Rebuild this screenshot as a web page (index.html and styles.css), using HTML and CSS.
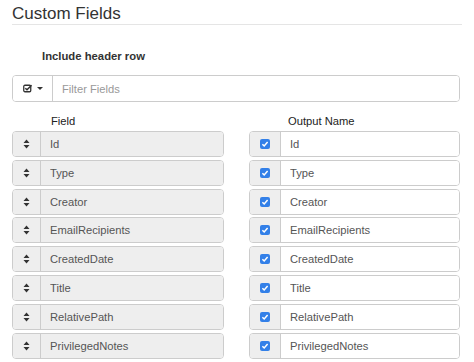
FILE: index.html
```html
<!DOCTYPE html>
<html lang="en">
<head>
    <meta charset="UTF-8">
    <title>Custom Fields</title>
    <link rel="stylesheet" href="styles.css">
</head>
<body>
    <div class="container">
        <h2 class="page-title">Custom Fields</h2>

        <div class="header-option">Include header row</div>

        <div class="input-group filter">
            <button class="addon addon-btn">
                <svg width="11" height="9" viewBox="0 0 11 9">
                    <rect x="0.75" y="1.25" width="7" height="6.5" rx="1.2" fill="none" stroke="#333" stroke-width="1.3"/>
                    <path d="M2.3 4.2 L4 5.8 L8.6 1.2" fill="none" stroke="#333" stroke-width="1.5"/>
                </svg>
                <span class="caret"></span>
            </button>
            <input class="field-input" type="text" placeholder="Filter Fields">
        </div>

        <div class="columns">
            <div class="column" id="fields">
                <div class="col-label">Field</div>
            </div>
            <div class="column" id="outputs">
                <div class="col-label">Output Name</div>
            </div>
        </div>
    </div>

    <script>
        const campos = ["Id", "Type", "Creator", "EmailRecipients", "CreatedDate", "Title", "RelativePath", "PrivilegedNotes"];
        const fields = document.getElementById("fields");
        const outputs = document.getElementById("outputs");

        const sortIcon = `<svg width="7" height="10" viewBox="0 0 7 10"><path d="M3.5 0.5 L6.5 4 L0.5 4 Z M0.5 6 L6.5 6 L3.5 9.5 Z" fill="#333"/></svg>`;
        const checkIcon = `<svg width="10" height="10" viewBox="0 0 10 10"><rect x="0" y="0" width="10" height="10" rx="2" fill="#3380e8"/><path d="M2.4 5.2 L4.2 7 L7.6 3" fill="none" stroke="#fff" stroke-width="1.5"/></svg>`;

        campos.forEach((nome) => {
            const linha = document.createElement("div");
            linha.className = "input-group row-field";
            linha.innerHTML = `<span class="addon addon-sort">${sortIcon}</span><input class="field-input" type="text" value="${nome}" disabled>`;
            fields.appendChild(linha);

            const saida = document.createElement("div");
            saida.className = "input-group row-output";
            saida.innerHTML = `<span class="addon addon-check">${checkIcon}</span><input class="field-input" type="text" value="${nome}">`;
            outputs.appendChild(saida);
        });
    </script>
</body>
</html>
```

FILE: styles.css
```css
body {
    margin: 0;
    font-family: "Liberation Sans", Arial, sans-serif;
    color: #333;
    background-color: #fff;
}

.container {
    width: 450px;
    padding: 0 12px;
}

.page-title {
    font-size: 17px;
    font-weight: normal;
    margin: 0;
    padding-top: 4px;
    height: 20px;
    line-height: 20px;
    border-bottom: 1px solid #e5e5e5;
}

.header-option {
    font-size: 11.3px;
    font-weight: bold;
    margin: 24px 0 0 30px;
    line-height: 14px;
}

.input-group {
    display: flex;
    border: 1px solid #ccc;
    border-radius: 4px;
    overflow: hidden;
    box-sizing: border-box;
}

.filter {
    margin-top: 12px;
    width: 448px;
    height: 27px;
}

.addon {
    display: flex;
    align-items: center;
    justify-content: center;
    background-color: #eee;
    border: none;
    border-right: 1px solid #ccc;
    padding: 0;
    flex: none;
}

.addon-btn {
    width: 40px;
    background-color: #fff;
    gap: 3px;
}

.caret {
    width: 0;
    height: 0;
    border-left: 3px solid transparent;
    border-right: 3px solid transparent;
    border-top: 3px solid #333;
}

.field-input {
    flex: 1;
    min-width: 0;
    border: none;
    outline: none;
    padding: 0 9px;
    font-family: inherit;
    font-size: 11.2px;
    color: #555;
    background-color: #fff;
}

.field-input::placeholder {
    color: #999;
}

.columns {
    display: grid;
    grid-template-columns: 212px 211px;
    gap: 25px;
    margin-top: 12px;
}

.column {
    display: flex;
    flex-direction: column;
    gap: 2.86px;
}

.col-label {
    font-size: 11.2px;
    line-height: 14px;
    padding-left: 39px;
    color: #222;
}

.row-field,
.row-output {
    height: 26px;
}

.row-field .field-input {
    background-color: #eee;
    color: #555;
}

.addon-sort {
    width: 27px;
}

.addon-check {
    width: 30px;
}
```
